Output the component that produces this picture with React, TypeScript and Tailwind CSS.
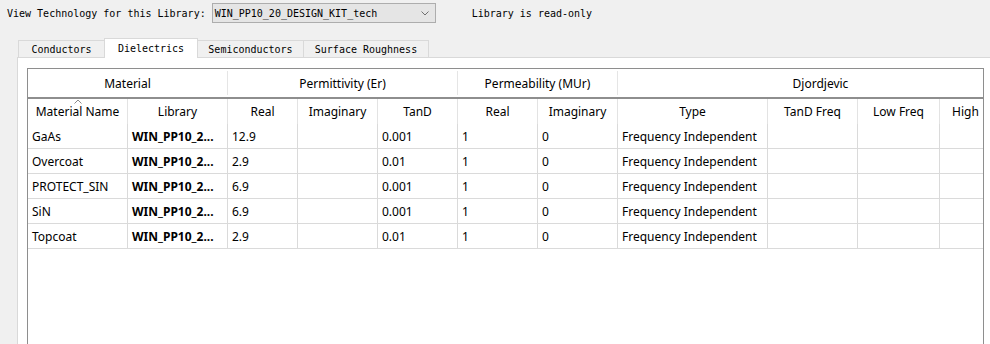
import React from "react";

const mono = { fontFamily: '"DejaVu Sans Mono", "Liberation Mono", monospace' };
const ui = { fontFamily: '"Noto Sans", "Open Sans", sans-serif' };

const cols = [100, 100, 70, 80, 80, 80, 80, 150, 90, 82, 52];
const headers = [
  "Material Name",
  "Library",
  "Real",
  "Imaginary",
  "TanD",
  "Real",
  "Imaginary",
  "Type",
  "TanD Freq",
  "Low Freq",
  "High",
];

const rows: string[][] = [
  ["GaAs", "WIN_PP10_2...", "12.9", "", "0.001", "1", "0", "Frequency Independent", "", "", ""],
  ["Overcoat", "WIN_PP10_2...", "2.9", "", "0.01", "1", "0", "Frequency Independent", "", "", ""],
  ["PROTECT_SIN", "WIN_PP10_2...", "6.9", "", "0.001", "1", "0", "Frequency Independent", "", "", ""],
  ["SiN", "WIN_PP10_2...", "6.9", "", "0.001", "1", "0", "Frequency Independent", "", "", ""],
  ["Topcoat", "WIN_PP10_2...", "2.9", "", "0.01", "1", "0", "Frequency Independent", "", "", ""],
];

const groups = [
  { label: "Material", w: 200, sep: true, pl: 0 },
  { label: "Permittivity (Er)", w: 230, sep: true, pl: 0 },
  { label: "Permeability (MUr)", w: 160, sep: true, pl: 0 },
  { label: "Djordjevic", w: 365, sep: false, pl: 40 },
];

export default function App() {
  return (
    <div className="w-[990px] h-[344px] bg-[#f0f0f0] overflow-hidden flex flex-col text-black">
      {/* top bar */}
      <div className="flex items-center h-[20px] mt-[3px] pl-[7px] text-[10px]" style={mono}>
        <span className="whitespace-nowrap">View Technology for this Library:</span>
        <div className="ml-[6px] w-[224px] h-[20px] border border-[#adadad] bg-[#e5e5e5] flex items-center pl-[2px] pr-[6px]">
          <span className="flex-1 whitespace-nowrap">WIN_PP10_20_DESIGN_KIT_tech</span>
          <svg width="8" height="5" viewBox="0 0 8 5" className="mt-[1px]">
            <path d="M0.5 0.5 L4 4 L7.5 0.5" fill="none" stroke="#707070" strokeWidth="1" />
          </svg>
        </div>
        <span className="ml-[36px] whitespace-nowrap">Library is read-only</span>
      </div>

      {/* tabs */}
      <div className="flex items-end h-[19px] mt-[15px] pl-[18px] text-[10px]" style={mono}>
        <div className="w-[86px] h-[17px] border-l border-t border-[#d9d9d9] bg-[#f0f0f0] flex items-center justify-center whitespace-nowrap pt-[1px]">
          Conductors
        </div>
        <div className="relative z-10 w-[94px] h-[20px] -mb-px border-l border-t border-r border-[#d9d9d9] bg-white flex items-center justify-center whitespace-nowrap">
          Dielectrics
        </div>
        <div className="w-[106px] h-[17px] border-t border-r border-[#d9d9d9] bg-[#f0f0f0] flex items-center justify-center whitespace-nowrap pt-[1px]">
          Semiconductors
        </div>
        <div className="w-[125px] h-[17px] border-t border-r border-[#d9d9d9] bg-[#f0f0f0] flex items-center justify-center whitespace-nowrap pt-[1px]">
          Surface Roughness
        </div>
      </div>

      {/* panel */}
      <div className="ml-[17px] flex-1 flex flex-col border-t border-l border-[#d9d9d9] bg-white pt-[10px] pl-[9px]">
        <div
          className="w-[957px] flex-1 border-l border-t border-r border-[#8e8e8e] overflow-hidden text-[12px] leading-none"
          style={ui}
        >
          {/* header row 1 */}
          <div className="flex h-[28px] w-[1000px]">
            {groups.map((g) => (
              <div key={g.label} className="flex shrink-0" style={{ width: g.w }}>
                <div
                  className="flex-1 flex items-center justify-center whitespace-nowrap pt-[1px]"
                  style={{ paddingLeft: g.pl }}
                >
                  {g.label}
                </div>
                {g.sep && <div className="w-px h-[24px] self-center bg-[#e5e5e5]" />}
              </div>
            ))}
          </div>
          <div className="h-[2px] bg-[#8e8e8e] w-[1000px]" />
          {/* header row 2 */}
          <div className="flex h-[25px] w-[1000px]">
            {headers.map((h, i) => (
              <div
                key={i}
                className="relative shrink-0 flex items-center justify-center whitespace-nowrap border-r border-[#e3e3e3] pt-[1px]"
                style={{ width: cols[i] }}
              >
                {i === 0 && (
                  <svg
                    width="8"
                    height="5"
                    viewBox="0 0 8 5"
                    className="absolute top-0 left-1/2 -translate-x-1/2"
                  >
                    <path d="M0.5 4.5 L4 1 L7.5 4.5" fill="none" stroke="#8a8a8a" strokeWidth="1" />
                  </svg>
                )}
                {h}
              </div>
            ))}
          </div>
          {/* data rows */}
          {rows.map((r, ri) => (
            <div key={ri} className="flex h-[25px] w-[1000px] border-b border-[#dadada]">
              {r.map((c, ci) => (
                <div
                  key={ci}
                  className={
                    "shrink-0 flex items-center px-[4px] pt-[1px] whitespace-nowrap overflow-hidden border-r border-[#dadada]" +
                    (ci === 1 ? " font-bold" : "")
                  }
                  style={{ width: cols[ci] }}
                >
                  {c}
                </div>
              ))}
            </div>
          ))}
        </div>
      </div>
    </div>
  );
}
